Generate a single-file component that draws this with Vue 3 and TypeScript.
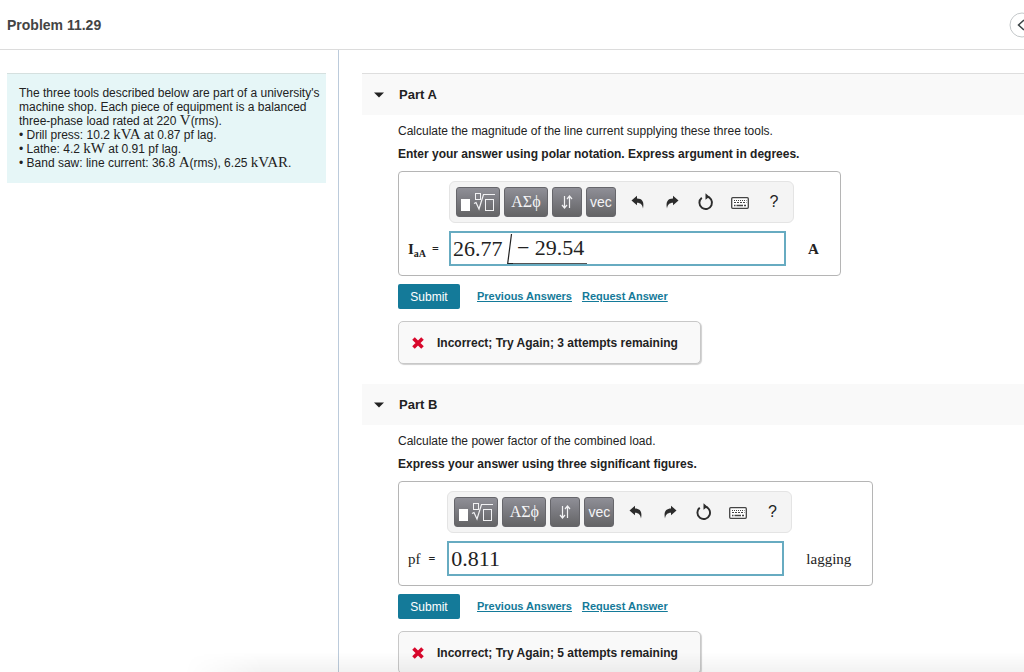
<script setup lang="ts">
import { ref } from 'vue'

interface Part {
  id: string
  title: string
  question: string
  instruction: string
  symbol: string
  subscript: string
  unit: string
  polar: boolean
  value: string
  angle: string
  attempts: number
}

const parts = ref<Part[]>([
  {
    id: 'a',
    title: 'Part A',
    question: 'Calculate the magnitude of the line current supplying these three tools.',
    instruction: 'Enter your answer using polar notation. Express argument in degrees.',
    symbol: 'I',
    subscript: 'aA',
    unit: 'A',
    polar: true,
    value: '26.77',
    angle: '− 29.54',
    attempts: 3,
  },
  {
    id: 'b',
    title: 'Part B',
    question: 'Calculate the power factor of the combined load.',
    instruction: 'Express your answer using three significant figures.',
    symbol: 'pf',
    subscript: '',
    unit: 'lagging',
    polar: false,
    value: '0.811',
    angle: '',
    attempts: 5,
  },
])
</script>

<template>
  <div class="page">
    <header class="topbar">
      <h1>Problem 11.29</h1>
      <button class="prev" type="button" aria-label="Previous problem">
        <svg width="26" height="26" viewBox="0 0 26 26" fill="none">
          <circle cx="13" cy="13" r="12" stroke="#c4c8ca" />
          <path d="M15 8 L9.500 13 L15 18" stroke="#3c4446" stroke-width="1.500" />
        </svg>
      </button>
    </header>

    <div class="columns">
      <aside class="side">
        <div class="intro">
          <p>
            The three tools described below are part of a university's machine shop. Each piece of
            equipment is a balanced three-phase load rated at 220 <span class="m">V</span>(rms).
          </p>
          <p>• Drill press: 10.2 <span class="m">kVA</span> at 0.87 pf lag.</p>
          <p>• Lathe: 4.2 <span class="m">kW</span> at 0.91 pf lag.</p>
          <p>• Band saw: line current: 36.8 <span class="m">A</span>(rms), 6.25 <span class="m">kVAR</span>.</p>
        </div>
      </aside>

      <main class="content">
        <section v-for="part in parts" :key="part.id" class="part">
          <button class="part-head" type="button" aria-expanded="true">
            <svg width="10" height="6" viewBox="0 0 10 6"><path d="M0 0.500H10L5 5.500Z" fill="#222" /></svg>
            <span>{{ part.title }}</span>
          </button>
          <div class="part-body">
            <p class="question">{{ part.question }}</p>
            <p class="instruction">{{ part.instruction }}</p>

            <div class="answer">
              <div class="toolbar" role="toolbar" aria-label="Math input tools">
                <div class="keys">
                  <button class="key wide" type="button" aria-label="Templates">
                    <svg width="36" height="22" viewBox="0 0 36 22" fill="none" stroke="#f2f2f4">
                      <rect x="1" y="8" width="9" height="12" fill="#fff" stroke="none" />
                      <rect x="15.500" y="2.500" width="5" height="6" />
                      <path d="M14 12.500L16 11.500L19 18L23.500 3.500H35" stroke-width="1.200" />
                      <rect x="25.500" y="8.500" width="8" height="11" />
                    </svg>
                  </button>
                  <button class="key wide greek" type="button" aria-label="Greek symbols">ΑΣϕ</button>
                  <button class="key" type="button" aria-label="Subscript and superscript">
                    <svg width="14" height="16" viewBox="0 0 14 16" fill="none" stroke="#f2f2f4" stroke-width="1.200">
                      <path d="M4.500 2V14M2 11L4.500 14L7 11M9.500 14V2M7 5L9.500 2L12 5" />
                    </svg>
                  </button>
                  <button class="key vec" type="button">vec</button>
                </div>
                <div class="keys">
                  <button class="tool" type="button" aria-label="Undo">
                    <svg width="14" height="14" viewBox="0 0 14 14" fill="#2c2c2c">
                      <path d="M0.500 5.500L6 0.800V3.500C11 3.600 13.500 6.500 12 13.500C11.500 9.500 9.500 7.800 6 7.700V10.300Z" />
                    </svg>
                  </button>
                  <button class="tool" type="button" aria-label="Redo">
                    <svg width="14" height="14" viewBox="0 0 14 14" fill="#2c2c2c">
                      <path d="M13.500 5.500L8 0.800V3.500C3 3.600 0.500 6.500 2 13.500C2.500 9.500 4.500 7.800 8 7.700V10.300Z" />
                    </svg>
                  </button>
                  <button class="tool" type="button" aria-label="Reset">
                    <svg width="16" height="18" viewBox="0 0 16 18" fill="none">
                      <path d="M8.500 3.500A6.300 6.300 0 1 1 3.800 4.800" stroke="#2c2c2c" stroke-width="1.900" />
                      <path d="M7.500 0.300L11.500 3.700L7.500 6.800Z" fill="#2c2c2c" />
                    </svg>
                  </button>
                  <button class="tool" type="button" aria-label="Keyboard shortcuts">
                    <svg class="kbd" width="18" height="12" viewBox="0 0 18 12" fill="none" stroke="#444">
                      <rect x="0.700" y="0.700" width="16.600" height="10.600" rx="1" fill="#fff" stroke-width="1.300" />
                      <path d="M3 3.500H15.500" stroke-dasharray="1 1" />
                      <path d="M3 5.500H15.500" stroke-dasharray="2 1" />
                      <path d="M3 8.500H4.500M5.500 8.500H12M13 8.500H15" stroke-width="1.300" />
                    </svg>
                  </button>
                  <button class="tool help" type="button" aria-label="Help">?</button>
                </div>
              </div>

              <label class="symbol" :class="{ strong: part.polar }" :for="'value-' + part.id">
                <span>{{ part.symbol }}<sub v-if="part.subscript">{{ part.subscript }}</sub></span>
                <span class="eq">=</span>
              </label>
              <div class="field">
                <input
                  :id="'value-' + part.id"
                  v-model="part.value"
                  type="text"
                  :class="part.polar ? 'magnitude' : 'full'"
                />
                <span v-if="part.polar" class="phase">
                  <svg width="6" height="31" viewBox="0 0 6 31" fill="none" stroke="#222" stroke-width="1.200">
                    <path d="M4.500 1L0.700 30.500H6" />
                  </svg>
                  <input v-model="part.angle" class="angle" type="text" aria-label="Angle in degrees" />
                </span>
              </div>
              <span class="unit" :class="{ strong: part.polar }">{{ part.unit }}</span>
            </div>

            <div class="actions">
              <button class="submit" type="button">Submit</button>
              <a href="#previous">Previous Answers</a>
              <a href="#request">Request Answer</a>
            </div>

            <div class="feedback" role="status">
              <svg width="14" height="14" viewBox="0 0 14 14">
                <path d="M2.500 2.500L11.500 11.500M11.500 2.500L2.500 11.500" stroke="#d8082c" stroke-width="3.600" />
              </svg>
              <span>Incorrect; Try Again; {{ part.attempts }} attempts remaining</span>
            </div>
          </div>
        </section>
      </main>
    </div>
    <div class="fade"></div>
  </div>
</template>

<style>
body {
  margin: 0;
  background: #fff;
}
</style>

<style scoped>
* {
  box-sizing: border-box;
}
.page {
  position: relative;
  display: flex;
  flex-direction: column;
  height: 100vh;
  overflow: hidden;
  font-family: "Liberation Sans", Arial, sans-serif;
  font-size: 12px;
  line-height: 14px;
  color: #222;
}
p,
h1 {
  margin: 0;
}
button {
  padding: 0;
  border: 0;
  background: none;
  font: inherit;
  color: inherit;
}
svg {
  display: block;
  flex: none;
}
.topbar {
  display: flex;
  align-items: center;
  justify-content: space-between;
  flex: none;
  height: 50px;
  padding-left: 7px;
  border-bottom: 1px solid #dcdcdc;
}
h1 {
  font-size: 14px;
  line-height: 20px;
  color: #444;
}
.prev {
  width: 15px;
  overflow: hidden;
}
.columns {
  display: grid;
  grid-template-columns: 339px 1fr;
  flex: 1;
  min-height: 0;
}
.side {
  padding: 23px 12px 0 7px;
  border-right: 1px solid #bccbdb;
}
.intro {
  padding: 12px 3px 13px 12px;
  border-top: 1px solid #d5e0df;
  background: #e6f6f7;
}
.m {
  font-family: "Liberation Serif", serif;
  font-size: 15px;
  line-height: 0;
}
.content {
  padding: 23px 0 0 23px;
  overflow: hidden;
}
.part-head {
  display: flex;
  align-items: center;
  gap: 15px;
  width: 100%;
  height: 41px;
  padding-left: 12px;
  background: #f9f9f9;
  font-size: 13px;
  font-weight: bold;
}
.part:first-child .part-head {
  height: 42px;
  border-top: 1px solid #dedede;
}
.part-body {
  padding: 9px 12px 20px 36px;
}
.instruction {
  margin-top: 9px;
  font-weight: bold;
}
.answer {
  display: grid;
  grid-template-columns: auto 345px auto;
  grid-template-rows: 42px 35px;
  row-gap: 8px;
  width: fit-content;
  margin-top: 10px;
  padding: 9px 21px 9px 9px;
  border: 1px solid #b5b5b5;
  border-radius: 4px;
}
.toolbar {
  display: flex;
  grid-column: 2;
  align-items: center;
  gap: 7px;
  padding: 0 6px;
  border: 1px solid #e4e4e4;
  border-radius: 6px;
  background: #f4f4f4;
}
.keys {
  display: flex;
  gap: 4px;
}
.key {
  display: flex;
  align-items: center;
  justify-content: center;
  flex: none;
  width: 30px;
  height: 30px;
  border: 1px solid #66666b;
  border-radius: 3px;
  background: linear-gradient(#8f8f97, #646466);
  color: #f4f4f6;
}
.wide {
  width: 44px;
}
.greek {
  font-family: "Liberation Serif", serif;
  font-size: 16px;
}
.vec {
  font-size: 14px;
}
.tool {
  display: flex;
  align-items: center;
  justify-content: center;
  flex: none;
  width: 30px;
  height: 30px;
}
.kbd {
  margin-top: 2px;
}
.help {
  font-size: 16px;
}
.symbol {
  display: flex;
  grid-column: 1;
  align-items: center;
  gap: 8px;
  padding-right: 12px;
  font-family: "Liberation Serif", serif;
  font-size: 15px;
}
.symbol sub {
  font-size: 10px;
  line-height: 0;
  vertical-align: -3px;
}
.symbol.strong {
  gap: 6px;
  padding-right: 10px;
  font-weight: bold;
}
.eq {
  font-size: 12px;
  font-weight: bold;
}
.field {
  display: flex;
  align-items: stretch;
  width: 337px;
  border: 2px solid #67abc1;
  background: #fff;
}
.field input {
  min-width: 0;
  padding: 0;
  border: 0;
  outline: 0;
  background: none;
  font-family: "Liberation Serif", serif;
  font-size: 22px;
  color: #222;
}
.field .full {
  flex: 1;
  padding-left: 2px;
}
.field .magnitude {
  width: 56px;
  padding-left: 2px;
}
.phase {
  display: flex;
}
.field .angle {
  width: 74px;
  height: 31px;
  padding-left: 4px;
  border-bottom: 1px solid #555;
}
.unit {
  align-self: center;
  padding-left: 14px;
  font-family: "Liberation Serif", serif;
  font-size: 15px;
}
.unit.strong {
  font-weight: bold;
}
.actions {
  display: flex;
  align-items: flex-start;
  margin-top: 8px;
}
.actions a {
  margin-top: 5px;
  margin-right: 10px;
  font-size: 11px;
  font-weight: bold;
  color: #147a99;
}
.submit {
  width: 62px;
  height: 25px;
  margin-right: 17px;
  border-radius: 2px;
  background: #147a99;
  font-size: 12px;
  color: #fff;
}
.feedback {
  display: flex;
  align-items: center;
  gap: 12px;
  width: fit-content;
  min-width: 303px;
  height: 43px;
  margin-top: 12px;
  padding: 0 12px;
  border: 1px solid #c8c8c8;
  border-radius: 5px;
  background: #f9f9f9;
  box-shadow: 1px 1px 1px #d0d0d0;
  font-weight: bold;
}
.fade {
  position: absolute;
  right: 0;
  bottom: 0;
  left: 18%;
  height: 20px;
  background: linear-gradient(transparent, rgba(0, 0, 0, 0.05));
  mask-image: linear-gradient(to right, transparent, #000 80px);
  pointer-events: none;
}
</style>
